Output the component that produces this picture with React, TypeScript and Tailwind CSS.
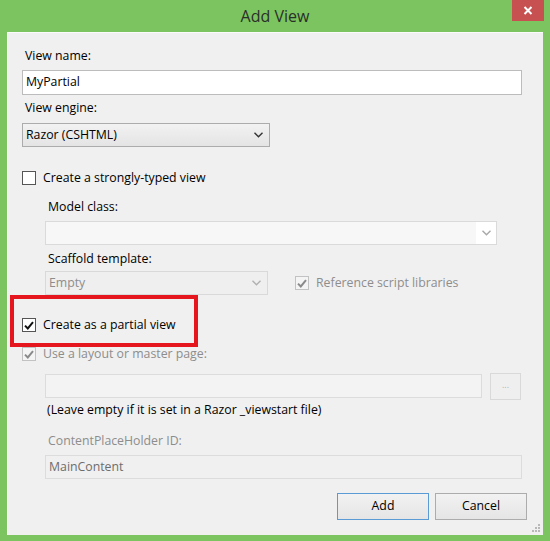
import React from 'react';

const font = { fontFamily: '"Open Sans", "Noto Sans", "Liberation Sans", sans-serif' };

function Chevron({ color = '#333' }: { color?: string }) {
    return (
        <svg width="9" height="6" viewBox="0 0 9 6" fill="none">
            <path d="M0.5 0.8 L4.5 4.8 L8.5 0.8" stroke={color} strokeWidth="1.4" />
        </svg>
    );
}

function CheckBox({ checked, disabled }: { checked?: boolean; disabled?: boolean }) {
    const box = disabled ? 'border-[#c2c2c2] bg-[#f4f4f4]' : 'border-[#555] bg-white';
    return (
        <div className={`w-[14px] h-[14px] border ${box} flex items-center justify-center shrink-0`}>
            {checked && (
                <svg width="10" height="9" viewBox="0 0 10 9" fill="none">
                    <path
                        d="M1 4.6 L3.8 7.4 L9 1.2"
                        stroke={disabled ? '#8a8a8a' : '#111'}
                        strokeWidth="2"
                    />
                </svg>
            )}
        </div>
    );
}

export default function App() {
    return (
        <div className="w-[550px] h-[541px] bg-[#7cc460] flex flex-col text-[12.3px] text-black" style={font}>
            <div className="relative h-[32px] shrink-0 flex items-center justify-center">
                <span className="text-[16px] text-[#2a2f2a] leading-none">Add View</span>
                <div className="absolute top-0 right-[6px] w-[32px] h-[21px] bg-[#c75050] flex items-center justify-center">
                    <svg width="10" height="9" viewBox="0 0 10 9">
                        <path d="M1.5 1 L8.5 8 M8.5 1 L1.5 8" stroke="#fff" strokeWidth="2" />
                    </svg>
                </div>
            </div>

            <div className="relative mx-[7px] h-[503px] bg-[#f0f0f0] border-t border-l border-[#fbfbfb] pl-[14px] pr-[16px]">
                <div className="h-[16px] leading-[16px] mt-[15px] pl-[3px]">View name:</div>
                <div className="mt-[6px] w-[500px] h-[25px] bg-white border border-[#bcbcbc] flex items-center pl-[3px]">
                    MyPartial
                </div>
                <div className="h-[16px] leading-[16px] mt-[5px] pl-[3px]">View engine:</div>
                <div className="mt-[7px] w-[248px] h-[24px] border border-[#acacac] bg-gradient-to-b from-[#f2f2f2] to-[#e4e4e4] flex items-center justify-between pl-[3px] pr-[6px]">
                    <span>Razor (CSHTML)</span>
                    <Chevron />
                </div>

                <div className="mt-[23px] h-[16px] flex items-center gap-[7px]">
                    <CheckBox />
                    <span>Create a strongly-typed view</span>
                </div>

                <div className="ml-[23px]">
                    <div className="h-[16px] leading-[16px] mt-[13px] pl-[3px]">Model class:</div>
                    <div className="mt-[6px] w-[452px] h-[24px] border border-[#dadada] bg-[#f7f7f7] flex justify-end">
                        <div className="w-[20px] h-full bg-white flex items-center justify-center">
                            <Chevron color="#a8a8a8" />
                        </div>
                    </div>
                    <div className="h-[16px] leading-[16px] mt-[6px] pl-[3px]">Scaffold template:</div>
                    <div className="mt-[4px] h-[24px] flex items-center gap-[27px]">
                        <div className="w-[223px] h-[24px] border border-[#d9d9d9] bg-[#efefef] flex items-center justify-between pl-[3px] pr-[6px] text-[#8d8d8d]">
                            <span>Empty</span>
                            <Chevron color="#b0b0b0" />
                        </div>
                        <div className="flex items-center gap-[7px] text-[#8d8d8d]">
                            <CheckBox checked disabled />
                            <span>Reference script libraries</span>
                        </div>
                    </div>
                </div>

                <div className="mt-[22px] h-[16px] flex items-center gap-[7px]">
                    <CheckBox checked />
                    <span>Create as a partial view</span>
                </div>
                <div className="mt-[13px] h-[16px] flex items-center gap-[7px] text-[#8d8d8d]">
                    <CheckBox checked disabled />
                    <span>Use a layout or master page:</span>
                </div>

                <div className="ml-[23px]">
                    <div className="mt-[12px] h-[24px] flex items-center gap-[8px]">
                        <div className="w-[437px] h-[24px] border border-[#dcdcdc] bg-[#f3f3f3]" />
                        <div className="w-[31px] h-[27px] border border-[#d9d9d9] bg-[#efefef] flex items-center justify-center text-[9px] text-[#b5b5b5] leading-none pb-[3px]">
                            ...
                        </div>
                    </div>
                    <div className="h-[16px] leading-[16px] mt-[4px] pl-[2px]">
                        (Leave empty if it is set in a Razor _viewstart file)
                    </div>
                    <div className="h-[16px] leading-[16px] mt-[15px] pl-[3px] text-[#8d8d8d]">ContentPlaceHolder ID:</div>
                    <div className="mt-[6px] w-[477px] h-[24px] border border-[#dcdcdc] bg-[#f0f0f0] flex items-center pl-[3px] text-[#6d6d6d]">
                        MainContent
                    </div>
                </div>

                <div className="mt-[14px] flex justify-end gap-[6px]">
                    <div className="w-[92px] h-[27px] border border-[#5b9bd5] bg-gradient-to-b from-[#f2f2f2] to-[#e5e5e5] flex items-center justify-center">
                        Add
                    </div>
                    <div className="w-[92px] h-[27px] border border-[#acacac] bg-gradient-to-b from-[#f2f2f2] to-[#e5e5e5] flex items-center justify-center">
                        Cancel
                    </div>
                </div>

                <svg className="absolute right-[2px] bottom-[2px]" width="10" height="10" viewBox="0 0 10 10">
                    <rect x="7" y="1" width="2" height="2" fill="#b8b8b8" />
                    <rect x="4" y="4" width="2" height="2" fill="#b8b8b8" />
                    <rect x="7" y="4" width="2" height="2" fill="#b8b8b8" />
                    <rect x="1" y="7" width="2" height="2" fill="#b8b8b8" />
                    <rect x="4" y="7" width="2" height="2" fill="#b8b8b8" />
                    <rect x="7" y="7" width="2" height="2" fill="#b8b8b8" />
                </svg>

                {/* red highlight around the partial-view option */}
                <div className="absolute left-[2px] top-[262px] w-[188px] h-[52px] border-[4px] border-[#e5161e] pointer-events-none" />
            </div>
        </div>
    );
}
